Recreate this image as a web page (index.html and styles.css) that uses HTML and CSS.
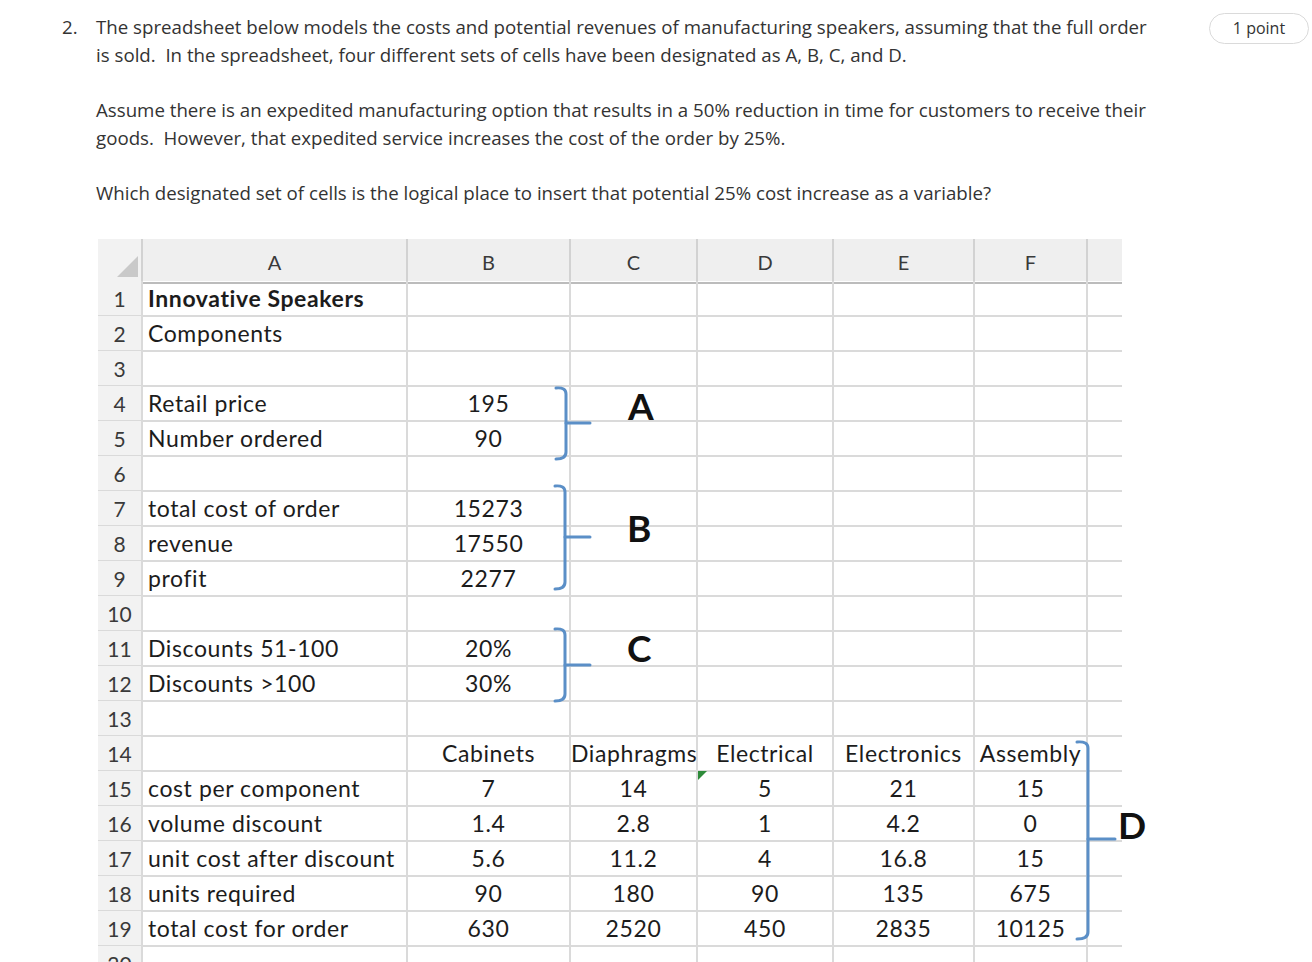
FILE: index.html
```html
<!DOCTYPE html>
<html lang="en">
<head>
<meta charset="utf-8">
<title>Question 2</title>
<link rel="stylesheet" href="styles.css">
</head>
<body>
<div class="question">
  <div class="qnum">2.</div>
  <div class="qbody">
    <p class="para">The spreadsheet below models the costs and potential revenues of manufacturing speakers, assuming that the full order is sold.&nbsp; In the spreadsheet, four different sets of cells have been designated as A, B, C, and D.</p>
    <p class="para">Assume there is an expedited manufacturing option that results in a 50% reduction in time for customers to receive their goods.&nbsp; However, that expedited service increases the cost of the order by 25%.</p>
    <p class="para">Which designated set of cells is the logical place to insert that potential 25% cost increase as a variable?</p>

    <div class="sheet">
      <div class="row hdr">
        <div class="rn corner"><svg width="45" height="42" viewBox="0 0 45 42"><polygon points="19,38 40,38 40,17" fill="#c9c9c9"/></svg></div>
        <div>A</div><div>B</div><div>C</div><div>D</div><div>E</div><div>F</div><div></div>
      </div>
      <div class="row"><div class="rn">1</div><div class="t b">Innovative Speakers</div><div></div><div></div><div></div><div></div><div></div><div></div></div>
      <div class="row"><div class="rn">2</div><div class="t">Components</div><div></div><div></div><div></div><div></div><div></div><div></div></div>
      <div class="row"><div class="rn">3</div><div></div><div></div><div></div><div></div><div></div><div></div><div></div></div>
      <div class="row"><div class="rn">4</div><div class="t">Retail price</div><div class="c">195</div><div></div><div></div><div></div><div></div><div></div></div>
      <div class="row"><div class="rn">5</div><div class="t">Number ordered</div><div class="c">90</div><div></div><div></div><div></div><div></div><div></div></div>
      <div class="row"><div class="rn">6</div><div></div><div></div><div></div><div></div><div></div><div></div><div></div></div>
      <div class="row"><div class="rn">7</div><div class="t">total cost of order</div><div class="c">15273</div><div></div><div></div><div></div><div></div><div></div></div>
      <div class="row"><div class="rn">8</div><div class="t">revenue</div><div class="c">17550</div><div></div><div></div><div></div><div></div><div></div></div>
      <div class="row"><div class="rn">9</div><div class="t">profit</div><div class="c">2277</div><div></div><div></div><div></div><div></div><div></div></div>
      <div class="row"><div class="rn">10</div><div></div><div></div><div></div><div></div><div></div><div></div><div></div></div>
      <div class="row"><div class="rn">11</div><div class="t">Discounts 51-100</div><div class="c">20%</div><div></div><div></div><div></div><div></div><div></div></div>
      <div class="row"><div class="rn">12</div><div class="t">Discounts &gt;100</div><div class="c">30%</div><div></div><div></div><div></div><div></div><div></div></div>
      <div class="row"><div class="rn">13</div><div></div><div></div><div></div><div></div><div></div><div></div><div></div></div>
      <div class="row"><div class="rn">14</div><div></div><div class="c">Cabinets</div><div class="c">Diaphragms</div><div class="c">Electrical</div><div class="c">Electronics</div><div class="c">Assembly</div><div></div></div>
      <div class="row"><div class="rn">15</div><div class="t">cost per component</div><div class="c">7</div><div class="c">14</div><div class="c flag">5</div><div class="c">21</div><div class="c">15</div><div></div></div>
      <div class="row"><div class="rn">16</div><div class="t">volume discount</div><div class="c">1.4</div><div class="c">2.8</div><div class="c">1</div><div class="c">4.2</div><div class="c">0</div><div></div></div>
      <div class="row"><div class="rn">17</div><div class="t">unit cost after discount</div><div class="c">5.6</div><div class="c">11.2</div><div class="c">4</div><div class="c">16.8</div><div class="c">15</div><div></div></div>
      <div class="row"><div class="rn">18</div><div class="t">units required</div><div class="c">90</div><div class="c">180</div><div class="c">90</div><div class="c">135</div><div class="c">675</div><div></div></div>
      <div class="row"><div class="rn">19</div><div class="t">total cost for order</div><div class="c">630</div><div class="c">2520</div><div class="c">450</div><div class="c">2835</div><div class="c">10125</div><div></div></div>
      <div class="row"><div class="rn">20</div><div></div><div></div><div></div><div></div><div></div><div></div><div></div></div>

      <svg class="braces" width="1024" height="742" viewBox="0 0 1024 742">
        <g fill="none" stroke="#5b8fc7" stroke-width="3" stroke-linecap="round">
          <path d="M458 149 Q468 148 468 155 V213 Q468 220 458 220"/>
          <path d="M468 184 H492"/>
          <path d="M457 247 Q467 246 467 253 V343 Q467 350 457 350"/>
          <path d="M467 298 H492"/>
          <path d="M457 390 Q467 389 467 396 V455 Q467 462 457 462"/>
          <path d="M467 426 H492"/>
          <path d="M979 503 Q990 502 990 509 V693 Q990 700 979 700"/>
          <path d="M990 600 H1017"/>
        </g>
      </svg>
      <span class="tag tag-a">A</span>
      <span class="tag tag-b">B</span>
      <span class="tag tag-c">C</span>
      <span class="tag tag-d">D</span>
    </div>
  </div>
  <div class="points">1 point</div>
</div>
</body>
</html>
```

FILE: styles.css
```css
html, body {
  margin: 0;
  padding: 0;
  background: #ffffff;
}

body {
  font-family: "Open Sans", "Noto Sans", sans-serif;
  color: #333333;
}

.question {
  display: flex;
  align-items: flex-start;
  padding: 13px 3px 0 62px;
}

.qnum {
  width: 34px;
  flex: none;
  font-size: 18.7px;
  line-height: 28px;
}

.qbody {
  width: 1062px;
  flex: none;
}

.para {
  margin: 0 0 27px 0;
  font-size: 18.7px;
  line-height: 28px;
  white-space: normal;
}

.para:last-of-type {
  margin-bottom: 32px;
}

.points {
  margin-left: auto;
  margin-top: 0;
  width: 100px;
  height: 31px;
  box-sizing: border-box;
  border: 1px solid #dadada;
  border-radius: 16px;
  font-size: 16px;
  line-height: 29px;
  text-align: center;
  color: #333333;
}

/* Spreadsheet */
.sheet {
  position: relative;
  margin-left: 2px;
  width: 1024px;
  font-family: "Lato", "Open Sans", sans-serif;
  font-size: 23px;
  letter-spacing: 0.6px;
  color: #1c1c1c;
}

.row {
  display: grid;
  grid-template-columns: 45px 265px 163px 127px 136px 141px 113px 34px;
  height: 35px;
}

.row > div {
  box-sizing: border-box;
  border-right: 2px solid #dadada;
  border-bottom: 2px solid #dadada;
  white-space: nowrap;
  line-height: 33px;
  padding-top: 1px;
}

.row > div:last-child {
  border-right: none;
}

.row.hdr {
  height: 42px;
  background: #efefef;
  font-size: 20px;
  letter-spacing: 0;
  color: #3a3a3a;
}

.row.hdr > div {
  text-align: center;
  line-height: 40px;
  padding-top: 3px;
  border-bottom: 2px solid #bcbcbc;
  border-right-color: #d2d2d2;
}

.row.hdr > div.corner {
  padding: 0;
  line-height: 0;
}

.rn {
  background: #f2f2f2;
  text-align: center;
  color: #3a3a3a;
  font-size: 21px;
  letter-spacing: 0;
}

.t {
  padding-left: 5px;
}

.b {
  font-weight: 700;
}

.c {
  text-align: center;
}

.flag {
  position: relative;
}

.flag::before {
  content: "";
  position: absolute;
  left: 0;
  top: 0;
  border-top: 9px solid #2e8b3a;
  border-right: 9px solid transparent;
}

.braces {
  position: absolute;
  left: 0;
  top: 0;
  pointer-events: none;
}

.tag {
  position: absolute;
  font-family: "Lato", "Liberation Sans", sans-serif;
  font-weight: 700;
  font-size: 37px;
  line-height: 37px;
  letter-spacing: 0;
  color: #111111;
}

.tag-a { left: 530px; top: 148px; }
.tag-b { left: 529px; top: 270px; }
.tag-c { left: 529px; top: 390px; }
.tag-d { left: 1020px; top: 567px; }
```
